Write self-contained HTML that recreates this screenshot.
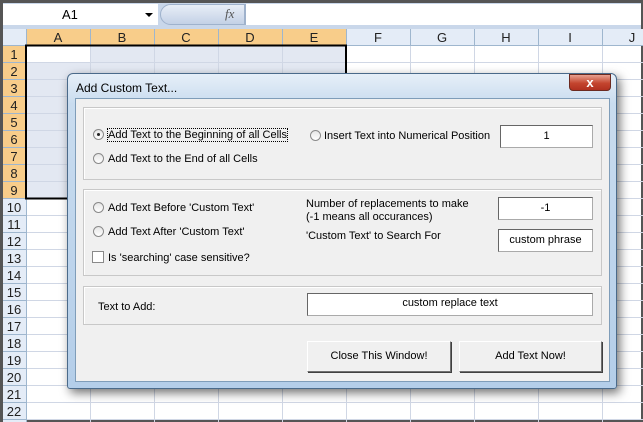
<!DOCTYPE html><html><head><style>
*{margin:0;padding:0;box-sizing:border-box}
body{width:643px;height:422px;overflow:hidden;position:relative;background:#fff;font-family:"Liberation Sans",sans-serif}
.a{position:absolute}
.t{position:absolute;font-size:11px;color:#000;white-space:nowrap}
.tb{position:absolute;background:#fff;border:1px solid #aaa;border-top-color:#666;border-left-color:#666;font-size:11px;text-align:center}
.rd{position:absolute;width:11px;height:11px;border-radius:50%;border:1px solid #8a8a8a;background:linear-gradient(#e6e6e6,#fff)}
.grp{position:absolute;border:1px solid #c8c8c8;box-shadow:1px 1px 0 #fff inset}
.btn{position:absolute;border:1px solid #707070;border-top-color:#fff;border-left-color:#fff;box-shadow:1px 1px 0 #404040;background:#f0f0f0;font-size:11px;text-align:center}
</style></head><body>
<div class="a" style="left:0;top:0;width:643px;height:29px;background:#c9d7ea;border-top:3px solid #555"></div>
<div class="a" style="left:3px;top:4px;width:155px;height:21px;background:#fff"></div>
<div class="t" style="left:62px;top:7px;font-size:13px">A1</div>
<div class="a" style="left:145px;top:13px;width:0;height:0;border-left:4px solid transparent;border-right:4px solid transparent;border-top:4px solid #000"></div>
<div class="a" style="left:160px;top:4px;width:85px;height:21px;border-radius:11px 0 0 11px;background:linear-gradient(#e8eef7,#c3d1e6);border:1px solid #9fb2cc"></div>
<div class="t" style="left:225px;top:6px;font-style:italic;font-family:'Liberation Serif',serif;font-size:13px;color:#555">fx</div>
<div class="a" style="left:245px;top:4px;width:398px;height:21px;background:#fff;border-left:1px solid #9fb2cc"></div>
<div class="a" style="left:0;top:0;width:3px;height:422px;background:#555"></div>
<div class="a" style="right:0;top:0;width:2px;height:422px;background:#555"></div>
<div class="a" style="left:0;bottom:0;width:643px;height:2px;background:#555"></div>
<svg class="a" style="left:0;top:29px" width="643" height="393">
<rect x="3" y="0" width="640" height="17" fill="#e4ecf7"/>
<rect x="26" y="0" width="320" height="17" fill="#f8cd8a"/>
<rect x="3" y="17" width="23" height="376" fill="#e4ecf7"/>
<rect x="3" y="17" width="23" height="153" fill="#f8cd8a"/>
<rect x="26" y="17" width="320" height="153" fill="#e3e8f2"/>
<rect x="26" y="17" width="64" height="17" fill="#fff"/>
<g stroke="#d0d7e5" stroke-width="1">
<line x1="90.5" y1="17" x2="90.5" y2="393"/><line x1="154.5" y1="17" x2="154.5" y2="393"/><line x1="218.5" y1="17" x2="218.5" y2="393"/><line x1="282.5" y1="17" x2="282.5" y2="393"/><line x1="346.5" y1="17" x2="346.5" y2="393"/><line x1="410.5" y1="17" x2="410.5" y2="393"/><line x1="474.5" y1="17" x2="474.5" y2="393"/><line x1="538.5" y1="17" x2="538.5" y2="393"/><line x1="602.5" y1="17" x2="602.5" y2="393"/>
</g>
<g stroke="#d0d7e5"><path d="M26 33.5H643M26 50.5H643M26 67.5H643M26 84.5H643M26 101.5H643M26 118.5H643M26 135.5H643M26 152.5H643M26 169.5H643M26 186.5H643M26 203.5H643M26 220.5H643M26 237.5H643M26 254.5H643M26 271.5H643M26 288.5H643M26 305.5H643M26 322.5H643M26 339.5H643M26 356.5H643M26 373.5H643M26 390.5H643"/></g>
<g stroke="#9eb6ce"><path d="M26.5 0V393M3 16.5H643M90.5 0V17M154.5 0V17M218.5 0V17M282.5 0V17M346.5 0V17M410.5 0V17M474.5 0V17M538.5 0V17M602.5 0V17M3 33.5H26M3 50.5H26M3 67.5H26M3 84.5H26M3 101.5H26M3 118.5H26M3 135.5H26M3 152.5H26M3 169.5H26M3 186.5H26M3 203.5H26M3 220.5H26M3 237.5H26M3 254.5H26M3 271.5H26M3 288.5H26M3 305.5H26M3 322.5H26M3 339.5H26M3 356.5H26M3 373.5H26M3 390.5H26"/></g>
<rect x="26" y="16.5" width="320" height="153" fill="none" stroke="#000" stroke-width="2"/>
<g font-family="Liberation Sans" font-size="13" fill="#222" text-anchor="middle">
<text x="58" y="13">A</text><text x="122" y="13">B</text><text x="186" y="13">C</text><text x="250" y="13">D</text><text x="314" y="13">E</text><text x="378" y="13">F</text><text x="442" y="13">G</text><text x="506" y="13">H</text><text x="570" y="13">I</text><text x="632" y="13">J</text>
<text x="14" y="30">1</text><text x="14" y="47">2</text><text x="14" y="64">3</text><text x="14" y="81">4</text><text x="14" y="98">5</text><text x="14" y="115">6</text><text x="14" y="132">7</text><text x="14" y="149">8</text><text x="14" y="166">9</text><text x="14" y="183">10</text><text x="14" y="200">11</text><text x="14" y="217">12</text><text x="14" y="234">13</text><text x="14" y="251">14</text><text x="14" y="268">15</text><text x="14" y="285">16</text><text x="14" y="302">17</text><text x="14" y="319">18</text><text x="14" y="336">19</text><text x="14" y="353">20</text><text x="14" y="370">21</text><text x="14" y="387">22</text>
</g>
</svg>
<div class="a" style="left:67px;top:73px;width:550px;height:316px;border-radius:6px 6px 3px 3px;border:1px solid #4a6a8a;background:linear-gradient(#e6eff8,#c9dcef 30px,#b4cee9);box-shadow:3px 4px 10px rgba(0,0,0,.55)"></div>
<div class="t" style="left:76px;top:81px;font-size:12px">Add Custom Text...</div>
<div class="a" style="left:569px;top:74px;width:42px;height:17px;border-radius:0 0 4px 4px;background:linear-gradient(#e8a090,#c4452e 55%,#b03020);border:1px solid #6b2a20;color:#fff;font-size:13px;font-weight:bold;text-align:center;line-height:15px">x</div>
<div class="a" style="left:75px;top:98px;width:535px;height:284px;background:#f0f0f0;border:1px solid #7f9db9"></div>
<div class="grp" style="left:83px;top:107px;width:519px;height:73px"></div>
<div class="grp" style="left:83px;top:189px;width:519px;height:87px"></div>
<div class="grp" style="left:83px;top:286px;width:519px;height:39px"></div>
<div class="rd" style="left:93px;top:129px"><div class="a" style="left:3px;top:3px;width:3px;height:3px;background:#222;border-radius:50%"></div></div>
<div class="t" style="left:108px;top:129px;outline:1px dotted #000">Add Text to the Beginning of all Cells</div>
<div class="rd" style="left:93px;top:153px"></div>
<div class="t" style="left:108px;top:153px">Add Text to the End of all Cells</div>
<div class="rd" style="left:310px;top:130px"></div>
<div class="t" style="left:324px;top:130px">Insert Text into Numerical Position</div>
<div class="tb" style="left:500px;top:125px;width:93px;height:23px;line-height:21px">1</div>
<div class="rd" style="left:93px;top:202px"></div>
<div class="t" style="left:108px;top:202px">Add Text Before 'Custom Text'</div>
<div class="rd" style="left:93px;top:226px"></div>
<div class="t" style="left:108px;top:226px">Add Text After 'Custom Text'</div>
<div class="a" style="left:92px;top:251px;width:12px;height:12px;border:1px solid #8a8a8a;background:#fff"></div>
<div class="t" style="left:108px;top:252px">Is 'searching' case sensitive?</div>
<div class="t" style="left:306px;top:198px;line-height:13px">Number of replacements to make<br>(-1 means all occurances)</div>
<div class="t" style="left:306px;top:230px">'Custom Text' to Search For</div>
<div class="tb" style="left:498px;top:197px;width:95px;height:23px;line-height:21px">-1</div>
<div class="tb" style="left:498px;top:229px;width:95px;height:23px;line-height:21px">custom phrase</div>
<div class="t" style="left:98px;top:301px">Text to Add:</div>
<div class="tb" style="left:307px;top:293px;width:286px;height:23px;line-height:19px">custom replace text</div>
<div class="btn" style="left:307px;top:341px;width:144px;height:31px;line-height:29px">Close This Window!</div>
<div class="btn" style="left:459px;top:341px;width:143px;height:31px;line-height:29px">Add Text Now!</div>
</body></html>
